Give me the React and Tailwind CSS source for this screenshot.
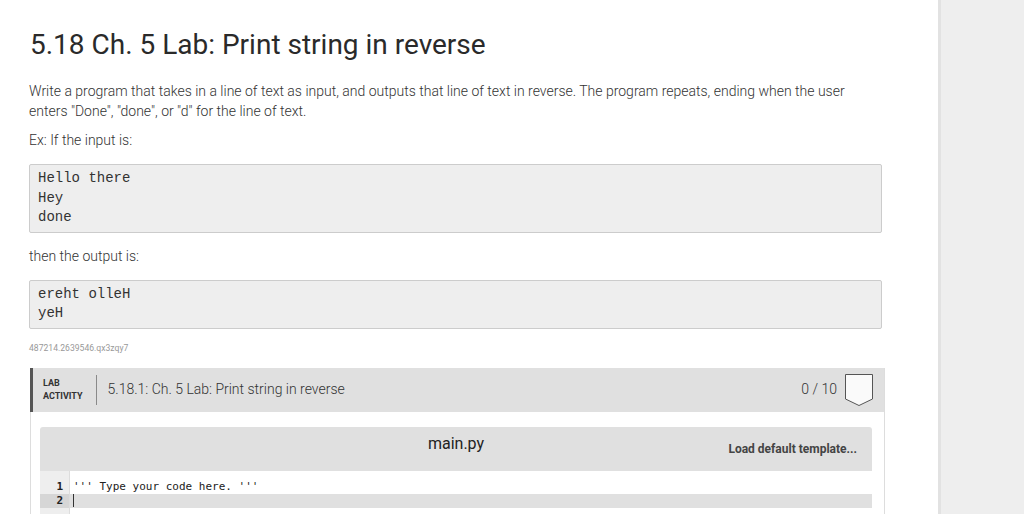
import React from 'react';

const SAMPLE_INPUT = ['Hello there', 'Hey', 'done'];
const SAMPLE_OUTPUT = ['ereht olleH', 'yeH'];

const CodeBlock = ({ lines }) => (
  <div className="w-[853px] bg-[#eeeeee] border border-[#cccccc] rounded-[2px] px-[8px] py-[4px] text-[14px] leading-[19.5px] text-[#333333] whitespace-pre font-['Liberation_Mono','Courier_New',monospace]">
    {lines.map((line) => (
      <div key={line}>{line}</div>
    ))}
  </div>
);

const Badge = () => (
  <svg width="30" height="34" viewBox="0 0 30 34">
    <path d="M1.5 1.5 H28.5 V26 L15 32.5 L1.5 26 Z" fill="#fafafa" stroke="#555555" strokeWidth="1" />
  </svg>
);

const LabActivity = () => (
  <div className="mt-[14px] w-[855px] ml-[1px] border-l border-r border-[#dddddd] bg-white">
    <div className="flex items-center h-[44px] bg-[#e0e0e0] border-l-[3px] border-[#555555] -ml-[1px] pl-[10px] pr-[10px]">
      <div className="text-[9px] leading-[13px] font-bold text-[#333333] uppercase">
        <div>Lab</div>
        <div>Activity</div>
      </div>
      <div className="w-px h-[30px] bg-[#8a8a8a] ml-[13px]" />
      <div className="ml-[11px] text-[14px] text-[#333333] font-light">5.18.1: Ch. 5 Lab: Print string in reverse</div>
      <div className="ml-auto flex items-center gap-[7px]">
        <span className="text-[14px] text-[#333333] font-light">0 / 10</span>
        <Badge />
      </div>
    </div>

    <div className="mt-[15px] ml-[9px] w-[832px] rounded-t-[3px] overflow-hidden">
      <div className="relative h-[44px] bg-[#e0e0e0] flex justify-center pt-[6px]">
        <span className="text-[16px] leading-[22px] text-[#222222]">main.py</span>
        <span className="absolute right-[15px] top-[13px] text-[12px] font-bold text-[#444444]">Load default template...</span>
      </div>
      <div className="flex font-['DejaVu_Sans_Mono',monospace] text-[11px] leading-[14px]">
        <div className="w-[29px] bg-[#eeeeee] pt-[9px] pb-[6px] text-right text-[#222222] font-bold">
          <div className="pr-[6px]">1</div>
          <div className="pr-[6px] bg-[#d6d6d6]">2</div>
        </div>
        <div className="flex-1 pt-[9px] border-l border-[#dddddd]">
          <div className="pl-[3px] text-[#222222] whitespace-pre">''' Type your code here. '''</div>
          <div className="pl-[3px] bg-[#e0e0e0] h-[14px] flex items-center">
            <div className="w-px h-[13px] bg-[#333333]" />
          </div>
        </div>
      </div>
    </div>
  </div>
);

export default function App() {
  return (
    <div className="flex w-[1024px] h-[514px] overflow-hidden bg-white font-['Roboto',sans-serif]">
      <div className="w-[938px] pl-[29px] pt-[27px]">
        <h1 className="text-[28px] leading-[36px] text-[#2a2a2a] pl-[1px]">5.18 Ch. 5 Lab: Print string in reverse</h1>
        <p className="mt-[18px] w-[853px] text-[14px] leading-[20px] text-[#333333] font-light">
          Write a program that takes in a line of text as input, and outputs that line of text in reverse. The program repeats, ending when the user enters "Done", "done", or "d" for the line of text.
        </p>
        <p className="mt-[9px] text-[14px] leading-[20px] text-[#333333] font-light">Ex: If the input is:</p>
        <div className="mt-[14px]">
          <CodeBlock lines={SAMPLE_INPUT} />
        </div>
        <p className="mt-[13px] text-[14px] leading-[20px] text-[#333333] font-light">then the output is:</p>
        <div className="mt-[14px]">
          <CodeBlock lines={SAMPLE_OUTPUT} />
        </div>
        <div className="mt-[13px] text-[8.6px] leading-[12px] text-[#999999]">487214.2639546.qx3zqy7</div>
        <LabActivity />
      </div>
      <div className="flex-1 bg-[#eeeeee] border-l-[3px] border-[#e2e2e2]" />
    </div>
  );
}
